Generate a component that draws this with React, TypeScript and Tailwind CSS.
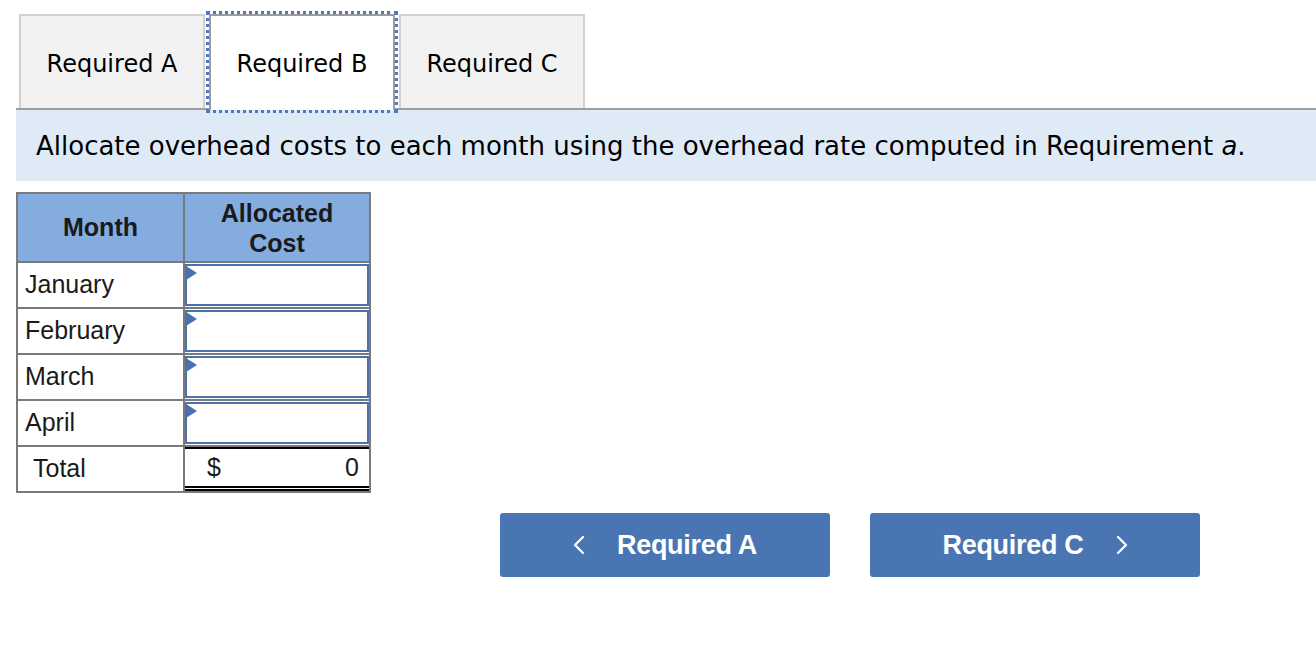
import type { ReactNode } from 'react';

const months = ['January', 'February', 'March', 'April'];

function Tab(props: { label: string; active?: boolean }) {
  if (props.active) {
    return (
      <div className="relative z-10 -mb-[2px] flex h-[96px] w-[186px] items-center justify-center border-2 border-b-0 border-[#9b9b9b] bg-white pt-[2px] outline-[3px] outline-dotted outline-offset-[0px] outline-[#4a78c2]">
        {props.label}
      </div>
    );
  }
  return (
    <div className="flex h-[94px] w-[186px] items-center justify-center border-2 border-b-0 border-[#d0d0d0] bg-[#f2f2f2] pt-[4px]">
      {props.label}
    </div>
  );
}

function Chevron(props: { dir: 'left' | 'right' }) {
  return (
    <svg width="12" height="18" viewBox="0 0 12 18" fill="none" className="shrink-0">
      <polyline
        points={props.dir === 'left' ? '10,1 2,9 10,17' : '2,1 10,9 2,17'}
        stroke="white"
        strokeWidth="2.2"
        strokeLinecap="round"
        strokeLinejoin="round"
      />
    </svg>
  );
}

function NavButton(props: { children: ReactNode }) {
  return (
    <button
      type="button"
      className="flex h-[64px] w-[330px] items-center justify-center gap-[32px] rounded-[3px] bg-[#4a75b3] font-['Liberation_Sans',Arial,sans-serif] text-[27px] font-bold tracking-[-0.3px] text-white"
    >
      {props.children}
    </button>
  );
}

export default function App() {
  return (
    <div className="min-h-[646px] bg-white pl-4 pt-[14px] text-black">
      <div className="flex items-end gap-[4px] border-b-2 border-[#9e9e9e] pl-[3px] font-['DejaVu_Sans',Verdana,sans-serif] text-[24px]">
        <Tab label="Required A" />
        <Tab label="Required B" active />
        <Tab label="Required C" />
      </div>

      <div className="flex h-[71px] items-center bg-[#deebf7] pl-[20px] pt-[2px] font-['DejaVu_Sans',Verdana,sans-serif] text-[26px]">
        <span>
          Allocate overhead costs to each month using the overhead rate computed in Requirement <i>a</i>.
        </span>
      </div>

      <table className="mt-[11px] border-collapse font-['Liberation_Sans',Arial,sans-serif] text-[25px] text-[#1a1a1a]">
        <thead>
          <tr className="h-[69px] bg-[#84acdf]">
            <th className="w-[167px] border-2 border-[#7a7a7a] font-bold">Month</th>
            <th className="w-[186px] border-2 border-[#7a7a7a] font-bold leading-[30px]">
              Allocated
              <br />
              Cost
            </th>
          </tr>
        </thead>
        <tbody>
          {months.map((m) => (
            <tr key={m} className="h-[46px]">
              <td className="border-2 border-[#7a7a7a] pl-[7px]">{m}</td>
              <td className="border-2 border-[#7a7a7a] p-0">
                <div className="relative h-[42px] border-2 border-[#4a72b0] bg-white">
                  <span className="absolute -left-[1px] top-0 h-0 w-0 border-y-[7px] border-l-[11px] border-y-transparent border-l-[#4a72b0]" />
                </div>
              </td>
            </tr>
          ))}
          <tr className="h-[46px]">
            <td className="border-2 border-[#7a7a7a] pl-[15px]">Total</td>
            <td className="border-2 border-[#7a7a7a] p-0">
              <div className="flex h-[44px] items-center justify-between border-t-2 border-b-[5px] border-double border-black px-[10px] pl-[22px]">
                <span>$</span>
                <span>0</span>
              </div>
            </td>
          </tr>
        </tbody>
      </table>

      <div className="ml-[484px] mt-[20px] flex gap-[40px]">
        <NavButton>
          <Chevron dir="left" />
          <span>Required A</span>
        </NavButton>
        <NavButton>
          <span>Required C</span>
          <Chevron dir="right" />
        </NavButton>
      </div>
    </div>
  );
}
